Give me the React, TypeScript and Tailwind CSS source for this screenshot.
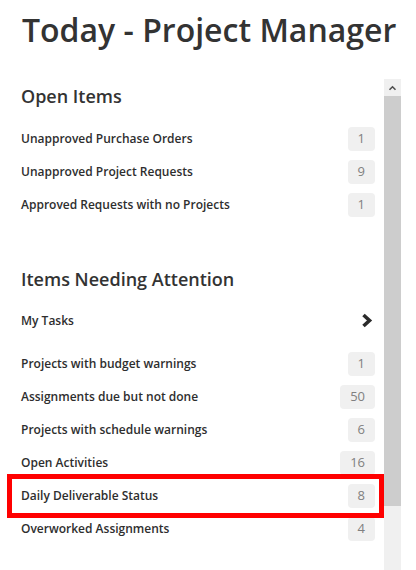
import React from 'react'

type Row = { label: string; count?: number; arrow?: boolean }

const openItems: Row[] = [
  { label: 'Unapproved Purchase Orders', count: 1 },
  { label: 'Unapproved Project Requests', count: 9 },
  { label: 'Approved Requests with no Projects', count: 1 },
]

const attention: Row[] = [
  { label: 'Projects with budget warnings', count: 1 },
  { label: 'Assignments due but not done', count: 50 },
  { label: 'Projects with schedule warnings', count: 6 },
  { label: 'Open Activities', count: 16 },
  { label: 'Daily Deliverable Status', count: 8 },
  { label: 'Overworked Assignments', count: 4 },
]

function ItemRow({ row }: { row: Row }) {
  return (
    <div className="flex h-[33px] items-center justify-between text-[12px] leading-[33px] font-semibold text-[#2e2e2e]">
      <span>{row.label}</span>
      {row.arrow ? (
        <svg width="12" height="15" viewBox="0 0 12 15" className="mr-[2px]">
          <polyline points="2.5,2 8.5,7.5 2.5,13" fill="none" stroke="#2b2b2b" strokeWidth="3.6" strokeLinejoin="miter" />
        </svg>
      ) : (
        <span className="flex h-[24px] min-w-[27px] items-center justify-center rounded-[4px] bg-[#f0f0f0] px-[10px] text-[13px] leading-none font-normal text-[#808080]">
          {row.count}
        </span>
      )}
    </div>
  )
}

export default function App() {
  return (
    <div className="relative h-[570px] w-[416px] overflow-hidden bg-white" style={{ fontFamily: '"Open Sans", "Liberation Sans", sans-serif' }}>
      <h1 className="pl-[22px] pt-[10px] text-[32px] leading-[40px] font-semibold text-[#333]">Today - Project Manager</h1>

      <div className="mt-[29px] flex h-[491px] w-[401px]">
        <div className="flex-1 overflow-hidden pl-[21px] pr-[9px]">
          <h2 className="mt-[4px] text-[18px] leading-[26px] font-semibold text-[#333]">Open Items</h2>
          <div className="mt-[13px]">
            {openItems.map(r => (
              <ItemRow key={r.label} row={r} />
            ))}
          </div>

          <h2 className="mt-[45px] text-[18px] leading-[26px] font-semibold text-[#333]">Items Needing Attention</h2>
          <div className="mt-[12px]">
            <ItemRow row={{ label: 'My Tasks', arrow: true }} />
          </div>
          <div className="mt-[10px]">
            {attention.map(r => (
              <ItemRow key={r.label} row={r} />
            ))}
          </div>
        </div>

        <div className="flex w-[17px] flex-col bg-[#f0f0f0]">
          <div className="flex h-[17px] items-center justify-center">
            <svg width="9" height="6" viewBox="0 0 9 6">
              <polyline points="1.5,4.8 4.5,1.8 7.5,4.8" fill="none" stroke="#505050" strokeWidth="1.6" />
            </svg>
          </div>
          <div className="h-[410px] bg-[#cdcdcd]" />
        </div>
      </div>

      <div className="absolute left-[7px] top-[474px] h-[44px] w-[377px] border-[5px] border-[#ff0000]" />
    </div>
  )
}
